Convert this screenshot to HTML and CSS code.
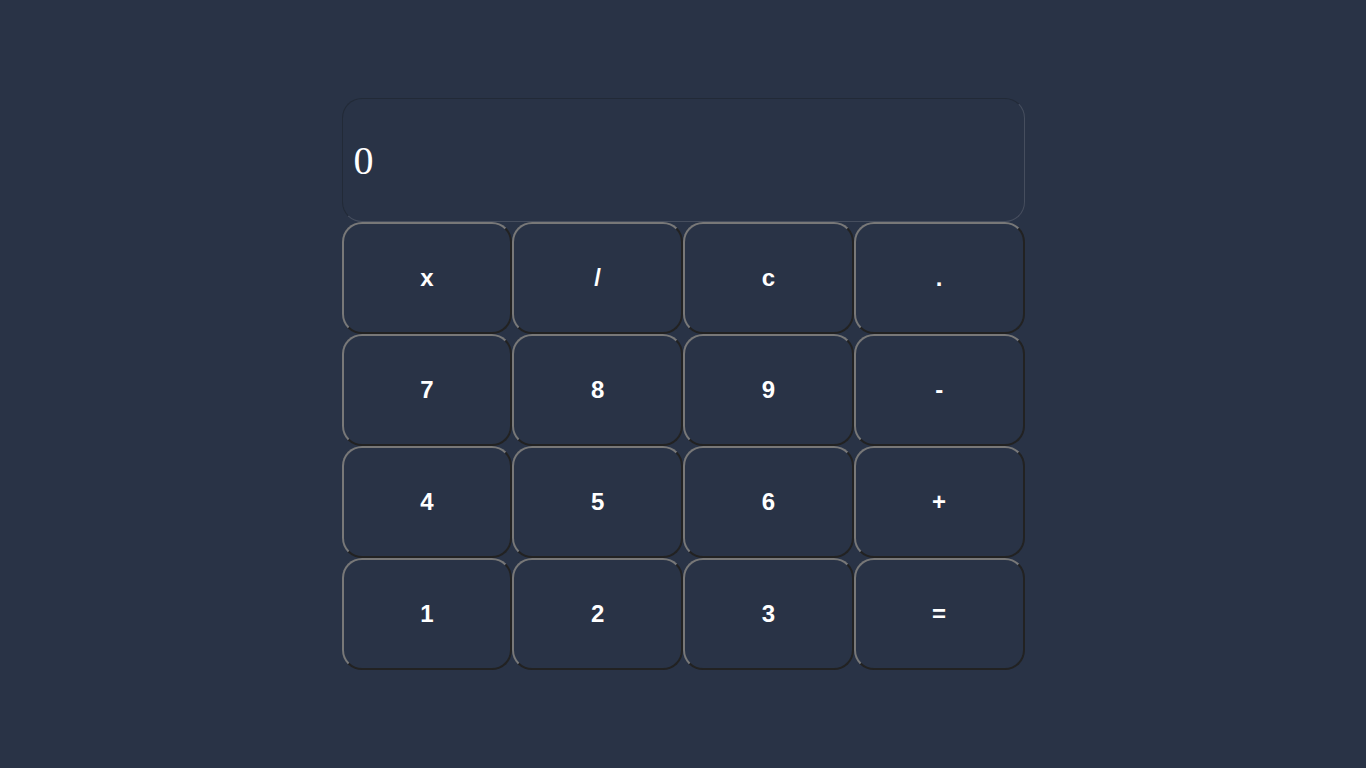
FILE: index.html
```html
<!DOCTYPE html>
<html>
<head>
<meta charset="utf-8">
<link rel="stylesheet" href="styles.css">
</head>
<body>
<div class="page">
  <div class="calc">
    <div class="display">0</div>
    <div class="keys">
      <button class="key">x</button>
      <button class="key">/</button>
      <button class="key">c</button>
      <button class="key">.</button>
      <button class="key">7</button>
      <button class="key">8</button>
      <button class="key">9</button>
      <button class="key">-</button>
      <button class="key">4</button>
      <button class="key">5</button>
      <button class="key">6</button>
      <button class="key">+</button>
      <button class="key">1</button>
      <button class="key">2</button>
      <button class="key">3</button>
      <button class="key">=</button>
    </div>
  </div>
</div>
</body>
</html>
```
FILE: styles.css
```css
html, body {
  margin: 0;
  padding: 0;
  background: #293346;
}
.page {
  height: 768px;
  display: flex;
  align-items: center;
  justify-content: center;
}
.calc {
  width: 683px;
  display: flex;
  flex-direction: column;
}
.display {
  box-sizing: border-box;
  height: 124px;
  border: 1px solid;
  border-color: #222a37 #464e5e #464e5e #222a37;
  border-radius: 20px;
  display: flex;
  align-items: center;
  padding: 0 11px;
  font-family: "Liberation Serif", serif;
  font-size: 40px;
  color: #ffffff;
}
.keys {
  display: grid;
  grid-template-columns: repeat(4, 1fr);
  grid-auto-rows: 112px;
}
.key {
  box-sizing: border-box;
  margin: 0;
  background: #293346;
  border: 2px solid;
  border-color: #787878 #222222 #222222 #787878;
  border-radius: 20px;
  color: #ffffff;
  font-family: "Liberation Sans", Arial, sans-serif;
  font-weight: bold;
  font-size: 24px;
  padding: 0;
}
```
